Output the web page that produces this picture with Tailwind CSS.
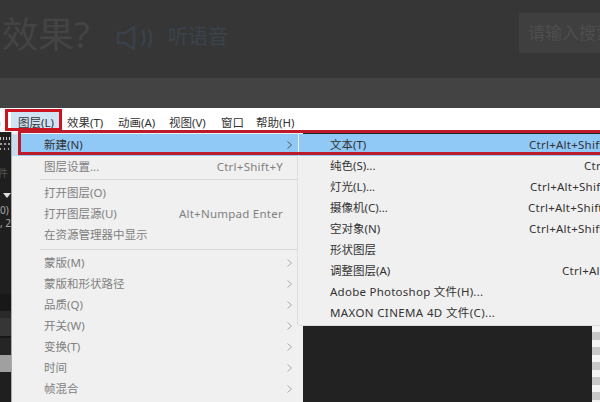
<!DOCTYPE html>
<html>
<head>
<meta charset="utf-8">
<script src="https://cdn.jsdelivr.net/npm/@tailwindcss/browser@4"></script>
</head>
<body class="m-0 bg-[#222]">
<div class="relative w-[600px] h-[402px] overflow-hidden font-['Noto_Sans','Noto_Sans_CJK_SC',sans-serif] text-[11.5px] text-[#3a3a3a]">
  <!-- dimmed page header -->
  <div class="relative h-[78px] bg-[#363636]">
    <div class="absolute left-[2px] top-[10px] text-[36px] leading-[50px] text-[#444]">效果?</div>
    <svg class="absolute left-[116px] top-[25px]" width="44" height="26" viewBox="0 0 44 26" fill="none" stroke="#39414a" stroke-width="2.5"><path d="M2 8h7l9-6v22l-9-6H2z"/><path d="M26 5c3 5 3 11 0 16M33 4c3 6 3 12 0 18"/></svg>
    <div class="absolute left-[168px] top-[24px] text-[20px] leading-[26px] text-[#3b434c]">听语音</div>
    <div class="absolute left-[519px] top-[13px] w-[81px] h-[40px] bg-[#3f3f3f] overflow-hidden pl-[9px] text-[17px] leading-[40px] whitespace-nowrap text-[#4e4e4e]">请输入搜索</div>
  </div>
  <div class="h-[30px] bg-[#434343]"></div>
  <!-- menu bar -->
  <div class="relative h-[24px] bg-white flex items-start text-[#333]">
    <span class="w-[11px] -ml-[3px] mr-[3px] mt-[4px] leading-[22px]">)</span>
    <span class="w-[49px] h-[18px] pl-[7px] mt-[4px] leading-[22px] bg-[#cfe3f5]">图层(L)</span>
    <span class="w-[51px] mt-[4px] pl-[7px] leading-[22px]">效果(T)</span>
    <span class="w-[51px] mt-[4px] pl-[7px] leading-[22px]">动画(A)</span>
    <span class="w-[52px] mt-[4px] pl-[7px] leading-[22px]">视图(V)</span>
    <span class="w-[35px] mt-[4px] pl-[7px] leading-[22px] box-content">窗口</span>
    <span class="mt-[4px] leading-[22px]">帮助(H)</span>
  </div>
  <!-- lower dark area -->
  <div class="relative h-[270px] bg-[#222]"></div>

  <!-- left strip -->
  <div class="absolute left-0 top-[132px] w-[12px] h-[270px] bg-[#1f1f1f] overflow-hidden text-[#a8a8a8] text-[10px] leading-[13px] border-r border-[#aaa]">
    <div class="h-[3px] mt-[5px] bg-[repeating-linear-gradient(90deg,#ccc_0_1px,#222_1px_3px)]"></div>
    <div class="h-[2px] mt-[3px] bg-[repeating-linear-gradient(90deg,#999_0_2px,#222_2px_4px)]"></div>
    <div class="h-[2px] mt-[3px] bg-[repeating-linear-gradient(90deg,#aaa_0_1px,#222_1px_4px)]"></div>
    <div class="mt-[17px] text-[#555] h-[14px] -ml-[2px]">件</div>
    <div class="mt-[12px] ml-[3px] w-0 h-0 border-x-[4px] border-t-[5px] border-x-transparent border-t-[#ddd]"></div>
    <div class="mt-[6px]">0)</div>
    <div>, 2</div>
    <div class="mt-[64px] h-[17px] bg-[#181818]"></div>
    <div class="h-[7px] bg-[#2a2a2a]"></div>
    <div class="h-[18px] bg-[#363636]"></div>
    <div class="h-[2px] bg-[#181818]"></div>
    <div class="h-[17px] bg-[#252525]"></div>
    <div class="h-[17px] bg-[#a0a0a0]"></div>
  </div>

  <!-- checker strip -->
  <div class="absolute left-[592px] top-[325px] w-[8px] h-[77px] bg-[repeating-linear-gradient(#f4f4f4_0_7px,#c8c8c8_7px_15px)]"></div>

  <!-- main menu -->
  <div class="absolute left-[12px] top-[132px] w-[291px] h-[270px] bg-[#f0f0f0] text-[#808080]">
    <div class="w-[286px] h-[193px] absolute left-0 top-0 border-r border-[#dedede]"></div>
    <div class="relative w-[286px]">
      <div class="h-[22px] mt-[2px] pt-0 bg-[#90c8f6] border-l-[6px] border-[#c8dcf0] flex items-center justify-between pl-[26px] pr-[6px] text-[#333]"><span>新建(N)</span><svg width="5" height="8" viewBox="0 0 5 8" fill="none" stroke="#555"><path d="M.5.5 4.5 4 .5 7.5"/></svg></div>
      <div class="h-[21px] flex items-center justify-between pl-[32px] pr-[15px]"><span>图层设置...</span><span class="tracking-[0.25px]">Ctrl+Shift+Y</span></div>
      <div class="h-[1px] bg-[#d8d8d8] ml-[28px] mt-[2px] mb-[2px]"></div>
      <div class="h-[21px] flex items-center pl-[32px]">打开图层(O)</div>
      <div class="h-[21px] flex items-center justify-between pl-[32px] pr-[15px]"><span>打开图层源(U)</span><span class="tracking-[0.25px]">Alt+Numpad Enter</span></div>
      <div class="h-[21px] flex items-center pl-[32px]">在资源管理器中显示</div>
      <div class="h-[1px] bg-[#d8d8d8] ml-[28px] mt-[4px] mb-[2px]"></div>
      <div class="h-[21px] flex items-center justify-between pl-[32px] pr-[6px]"><span>蒙版(M)</span><svg width="5" height="8" viewBox="0 0 5 8" fill="none" stroke="#aaa"><path d="M.5.5 4.5 4 .5 7.5"/></svg></div>
      <div class="h-[21px] flex items-center justify-between pl-[32px] pr-[6px]"><span>蒙版和形状路径</span><svg width="5" height="8" viewBox="0 0 5 8" fill="none" stroke="#aaa"><path d="M.5.5 4.5 4 .5 7.5"/></svg></div>
      <div class="h-[21px] flex items-center justify-between pl-[32px] pr-[6px]"><span>品质(Q)</span><svg width="5" height="8" viewBox="0 0 5 8" fill="none" stroke="#aaa"><path d="M.5.5 4.5 4 .5 7.5"/></svg></div>
      <div class="h-[21px] flex items-center justify-between pl-[32px] pr-[6px]"><span>开关(W)</span><svg width="5" height="8" viewBox="0 0 5 8" fill="none" stroke="#aaa"><path d="M.5.5 4.5 4 .5 7.5"/></svg></div>
      <div class="h-[21px] flex items-center justify-between pl-[32px] pr-[6px]"><span>变换(T)</span><svg width="5" height="8" viewBox="0 0 5 8" fill="none" stroke="#aaa"><path d="M.5.5 4.5 4 .5 7.5"/></svg></div>
      <div class="h-[21px] flex items-center justify-between pl-[32px] pr-[6px]"><span>时间</span><svg width="5" height="8" viewBox="0 0 5 8" fill="none" stroke="#aaa"><path d="M.5.5 4.5 4 .5 7.5"/></svg></div>
      <div class="h-[21px] flex items-center justify-between pl-[32px] pr-[6px]"><span>帧混合</span><svg width="5" height="8" viewBox="0 0 5 8" fill="none" stroke="#aaa"><path d="M.5.5 4.5 4 .5 7.5"/></svg></div>
    </div>
  </div>

  <!-- submenu -->
  <div class="absolute left-[299px] top-[134px] w-[301px] h-[192px] bg-[#f0f0f0] border-b border-[#dcdcdc] text-[#333] whitespace-nowrap overflow-hidden">
    <div class="relative h-[22px] bg-[#90c8f6] flex items-center pl-[31px]">文本(T)<span class="absolute left-[230px] tracking-[0.25px]">Ctrl+Alt+Shift+T</span></div>
    <div class="relative h-[21px] -mt-[1px] flex items-center pl-[31px]">纯色(S)...<span class="absolute left-[285px] tracking-[0.25px]">Ctrl+Y</span></div>
    <div class="relative h-[21px] flex items-center pl-[31px]">灯光(L)...<span class="absolute left-[231px] tracking-[0.25px]">Ctrl+Alt+Shift+L</span></div>
    <div class="relative h-[21px] flex items-center pl-[31px]">摄像机(C)...<span class="absolute left-[229px] tracking-[0.25px]">Ctrl+Alt+Shift+C</span></div>
    <div class="relative h-[21px] flex items-center pl-[31px]">空对象(N)<span class="absolute left-[230px] tracking-[0.25px]">Ctrl+Alt+Shift+Y</span></div>
    <div class="relative h-[21px] flex items-center pl-[31px]">形状图层</div>
    <div class="relative h-[21px] flex items-center pl-[31px]">调整图层(A)<span class="absolute left-[263px] tracking-[0.25px]">Ctrl+Alt+Y</span></div>
    <div class="relative h-[21px] flex items-center pl-[31px] tracking-[0.25px]">Adobe Photoshop 文件(H)...</div>
    <div class="relative h-[21px] flex items-center pl-[31px] tracking-[0.37px]">MAXON CINEMA 4D 文件(C)...</div>
  </div>

  <!-- red annotations -->
  <div class="absolute left-[5px] top-[109px] w-[57px] h-[22px] border-[3px] border-[#cc1420]"></div>
  <div class="absolute left-[18px] top-[130px] w-[582px] h-[25px] border-[3px] border-r-0 border-[#bd1a2a]"></div>
</div>
</body>
</html>
